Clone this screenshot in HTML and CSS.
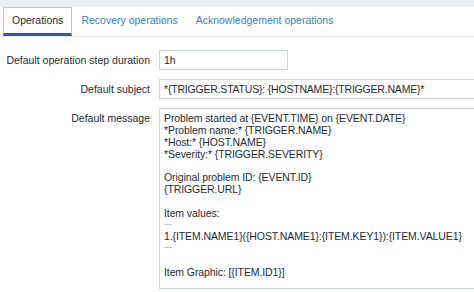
FILE: index.html
```html
<!DOCTYPE html>
<html lang="en">
<head>
  <meta charset="UTF-8">
  <title>Action operations</title>
  <link rel="stylesheet" href="styles.css">
</head>
<body>
  <div class="top-band"></div>
  <ul class="tabs">
    <li class="tab active">Operations</li>
    <li class="tab">Recovery operations</li>
    <li class="tab">Acknowledgement operations</li>
  </ul>

  <div class="form">
    <div class="form-row">
      <label class="form-label">Default operation step duration</label>
      <div class="field field-short">1h</div>
    </div>
    <div class="form-row">
      <label class="form-label">Default subject</label>
      <div class="field field-wide">*{TRIGGER.STATUS}: {HOSTNAME}:{TRIGGER.NAME}*</div>
    </div>
    <div class="form-row">
      <label class="form-label">Default message</label>
      <div class="field field-wide field-text">Problem started at {EVENT.TIME} on {EVENT.DATE}
*Problem name:* {TRIGGER.NAME}
*Host:* {HOST.NAME}
*Severity:* {TRIGGER.SEVERITY}

Original problem ID: {EVENT.ID}
{TRIGGER.URL}

Item values:
<span class="ticks">```</span>
1.{ITEM.NAME1}({HOST.NAME1}:{ITEM.KEY1}):{ITEM.VALUE1}
<span class="ticks">```</span>

Item Graphic: [{ITEM.ID1}]</div>
    </div>
  </div>
</body>
</html>
```

FILE: styles.css
```css
body {
  margin: 0;
  font-family: "Liberation Sans", Arial, sans-serif;
  font-size: 10.5px;
  color: #1f2c33;
  background: #fff;
  overflow: hidden;
}

.top-band {
  height: 7px;
  background: #eceff1;
}

.tabs {
  display: flex;
  list-style: none;
  margin: 0;
  padding: 0 0 0 3px;
  border-bottom: 1px solid #e8e8e8;
}

.tab {
  padding: 6px 8px 7px 8px;
  color: #3a82c0;
  line-height: 12px;
  border: 1px solid transparent;
  border-bottom: 3px solid transparent;
}

.tab.active {
  color: #1f2c33;
  border-color: #f0b8b8;
  border-bottom-color: #2a5f91;
}

.form {
  padding-top: 13px;
}

.form-row {
  display: flex;
  align-items: flex-start;
  margin-bottom: 9px;
}

.form-label {
  width: 150px;
  flex: none;
  text-align: right;
  white-space: nowrap;
  padding-top: 4px;
  margin-right: 9px;
  color: #1f2c33;
}

.field {
  box-sizing: border-box;
  height: 20px;
  padding: 3px 4px;
  border: 1px solid #cfd4d7;
  background: #fff;
  line-height: 12px;
  letter-spacing: -0.2px;
}

.field-short {
  width: 129px;
}

.field-wide {
  width: 330px;
  flex: none;
}

.field-text {
  height: 181px;
  white-space: pre;
  line-height: 11.85px;
  padding-top: 4px;
  letter-spacing: -0.1px;
}

.ticks {
  font-size: 8px;
  line-height: 8px;
}
```
